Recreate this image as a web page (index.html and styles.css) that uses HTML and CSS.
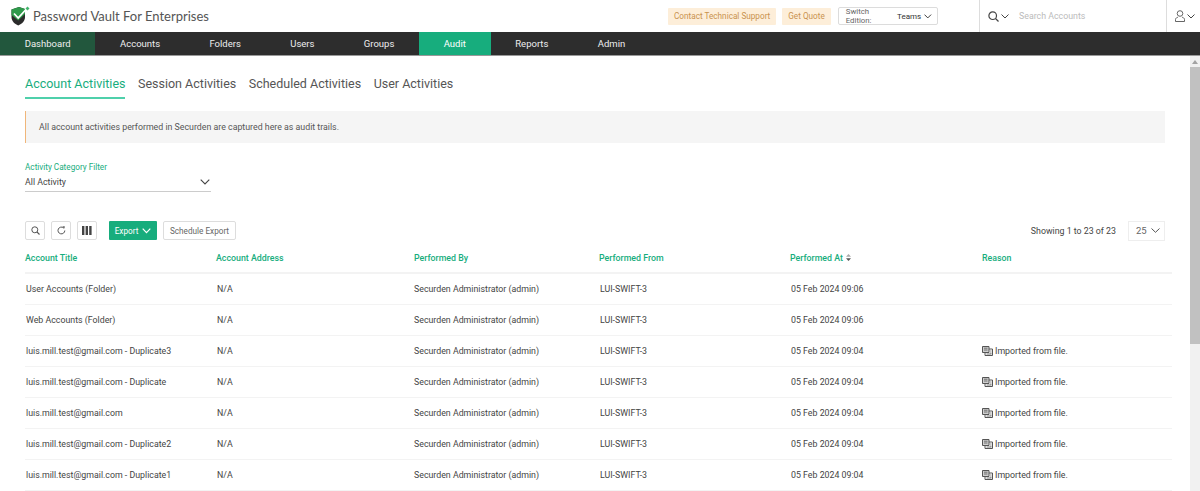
FILE: index.html
```html
<!DOCTYPE html>
<html lang="en">
<head>
    <meta charset="UTF-8">
    <title>Password Vault For Enterprises - Audit</title>
    <link rel="stylesheet" href="styles.css">
</head>
<body>
    <header class="topbar">
        <div class="brand">
            <svg class="logo" width="19" height="20" viewBox="0 0 19 20">
                <path d="M0.5 3.5 L8 1 L14 3 L14 11 C14 15 11 18 7.2 19.5 C3.5 18 0.5 15 0.5 11 Z" fill="#2b2b2b"/>
                <path d="M0.5 3.5 L8 1 L14 3 L14 8 L7.2 14.5 L0.5 9 Z" fill="#2f9a4b"/>
                <path d="M3 7.5 L7.2 12 L15 3.5" fill="none" stroke="#fff" stroke-width="1.8"/>
                <path d="M14.5 2.5 L16.5 0.5 L18.5 2.5 L16.5 4.5 Z" fill="#43b56d"/>
            </svg>
            <span class="brand-name">Password Vault For Enterprises</span>
        </div>
        <div class="top-actions">
            <a class="promo">Contact Technical Support</a>
            <a class="promo">Get Quote</a>
            <div class="edition">
                <span class="edition-label">Switch Edition:</span>
                <span class="edition-value">Teams</span>
                <svg class="chev" width="8" height="5" viewBox="0 0 8 5"><path d="M0.5 0.5 L4 4 L7.5 0.5" fill="none" stroke="#333" stroke-width="1"/></svg>
            </div>
        </div>
        <div class="search">
            <svg width="11" height="11" viewBox="0 0 11 11"><circle cx="4.7" cy="4.7" r="3.8" fill="none" stroke="#444" stroke-width="1.2"/><path d="M7.5 7.5 L10.5 10.5" stroke="#444" stroke-width="1.3"/></svg>
            <svg class="chev" width="8" height="5" viewBox="0 0 8 5"><path d="M0.5 0.5 L4 4 L7.5 0.5" fill="none" stroke="#444" stroke-width="1"/></svg>
            <span class="search-text">Search Accounts</span>
        </div>
        <div class="user">
            <svg width="10" height="12" viewBox="0 0 10 12"><circle cx="5" cy="3.5" r="2.8" fill="none" stroke="#555" stroke-width="0.9"/><path d="M0.5 11.5 L0.5 9.5 C0.5 8 2 7.5 3 7.2 M9.5 11.5 L9.5 9.5 C9.5 8 8 7.5 7 7.2 M0.5 11.5 L9.5 11.5" fill="none" stroke="#555" stroke-width="0.9"/></svg>
            <svg class="chev" width="8" height="5" viewBox="0 0 8 5"><path d="M0.5 0.5 L4 4 L7.5 0.5" fill="none" stroke="#444" stroke-width="1"/></svg>
        </div>
    </header>

    <nav class="mainnav">
        <a class="nav-dash">Dashboard</a>
        <a>Accounts</a>
        <a>Folders</a>
        <a>Users</a>
        <a>Groups</a>
        <a class="nav-audit">Audit</a>
        <a>Reports</a>
        <a>Admin</a>
    </nav>

    <div class="page">
        <main class="content">
            <div class="tabs">
                <a class="tab active">Account Activities</a>
                <a class="tab">Session Activities</a>
                <a class="tab">Scheduled Activities</a>
                <a class="tab">User Activities</a>
            </div>

            <div class="notice">All account activities performed in Securden are captured here as audit trails.</div>

            <div class="filter">
                <label class="filter-label">Activity Category Filter</label>
                <div class="filter-select">
                    <span>All Activity</span>
                    <svg width="10" height="6" viewBox="0 0 10 6"><path d="M0.7 0.7 L5 5 L9.3 0.7" fill="none" stroke="#444" stroke-width="1.1"/></svg>
                </div>
            </div>

            <div class="toolbar">
                <button class="tool">
                    <svg width="9" height="9" viewBox="0 0 9 9"><circle cx="3.8" cy="3.8" r="3" fill="none" stroke="#555" stroke-width="1"/><path d="M6 6 L8.5 8.5" stroke="#555" stroke-width="1.1"/></svg>
                </button>
                <button class="tool">
                    <svg width="9" height="9" viewBox="0 0 9 9"><path d="M7.8 4.5 A3.4 3.4 0 1 1 6.5 1.8" fill="none" stroke="#555" stroke-width="1"/><path d="M5.6 0.2 L8 0.6 L7 2.9 Z" fill="#555"/></svg>
                </button>
                <button class="tool">
                    <svg width="10" height="9" viewBox="0 0 10 9"><path d="M0 0 H2.4 V9 H0 Z M3.6 0 H6 V9 H3.6 Z M7.2 0 H9.6 V9 H7.2 Z" fill="#444"/></svg>
                </button>
                <button class="export">Export
                    <svg width="9" height="6" viewBox="0 0 9 6"><path d="M0.7 0.7 L4.5 4.6 L8.3 0.7" fill="none" stroke="#fff" stroke-width="1.2"/></svg>
                </button>
                <button class="schedule">Schedule Export</button>
                <div class="pager">
                    <span>Showing 1 to 23 of 23</span>
                    <div class="page-size">
                        <span>25</span>
                        <svg width="9" height="5" viewBox="0 0 9 5"><path d="M0.5 0.5 L4.5 4.3 L8.5 0.5" fill="none" stroke="#555" stroke-width="1"/></svg>
                    </div>
                </div>
            </div>

            <table class="audit">
                <colgroup>
                    <col class="c1"><col class="c2"><col class="c3"><col class="c4"><col class="c5"><col>
                </colgroup>
                <thead>
                    <tr>
                        <th>Account Title</th>
                        <th>Account Address</th>
                        <th>Performed By</th>
                        <th>Performed From</th>
                        <th>Performed At <svg class="sort" width="5" height="7" viewBox="0 0 5 7"><path d="M0 2.7 L2.5 0 L5 2.7 Z" fill="#aaa"/><path d="M0 4.3 L2.5 7 L5 4.3 Z" fill="#555"/></svg></th>
                        <th>Reason</th>
                    </tr>
                </thead>
                <tbody id="rows"></tbody>
            </table>
        </main>
        <aside class="rail">
            <svg class="rail-up" width="6" height="4" viewBox="0 0 6 4"><path d="M0 4 L3 0 L6 4 Z" fill="#a3a3a3"/></svg>
            <div class="rail-thumb"></div>
        </aside>
    </div>

    <script>
        const rows = [
            ["User Accounts (Folder)", "05 Feb 2024 09:06", false],
            ["Web Accounts (Folder)", "05 Feb 2024 09:06", false],
            ["luis.mill.test@gmail.com - Duplicate3", "05 Feb 2024 09:04", true],
            ["luis.mill.test@gmail.com - Duplicate", "05 Feb 2024 09:04", true],
            ["luis.mill.test@gmail.com", "05 Feb 2024 09:04", true],
            ["luis.mill.test@gmail.com - Duplicate2", "05 Feb 2024 09:04", true],
            ["luis.mill.test@gmail.com - Duplicate1", "05 Feb 2024 09:04", true]
        ];
        const reason = `<svg class="reason-icon" width="11" height="10" viewBox="0 0 11 10"><path d="M3 3 H10.5 V9.5 H3 Z" fill="#fff" stroke="#555"/><path d="M0.5 0.5 H7 V6.5 H0.5 Z" fill="#cfcfcf" stroke="#555"/><path d="M2 2.2 H5.5 M2 4 H5.5 M8.2 5 H9.5 M8.2 7 H9.5 M4.5 8 H9.5" stroke="#555" stroke-width="0.8"/></svg>Imported from file.`;
        document.getElementById('rows').innerHTML = rows.map(r => `<tr>
            <td>${r[0]}</td>
            <td>N/A</td>
            <td>Securden Administrator (admin)</td>
            <td>LUI-SWIFT-3</td>
            <td>${r[1]}</td>
            <td>${r[2] ? reason : ""}</td>
        </tr>`).join("");
    </script>
</body>
</html>
```

FILE: styles.css
```css
* {
    margin: 0;
    padding: 0;
    box-sizing: border-box;
}
html, body {
    width: 100%;
    height: 100%;
    overflow: hidden;
}
body {
    font-family: Roboto, sans-serif;
    font-size: 8.8px;
    color: #444;
    background: white;
    display: flex;
    flex-direction: column;
}
.topbar {
    height: 32px;
    display: flex;
    align-items: stretch;
    flex-shrink: 0;
}
.brand {
    display: flex;
    align-items: center;
    width: 668px;
    padding-left: 11px;
}
.logo {
    margin-right: 3px;
}
.brand-name {
    font-family: Lato, sans-serif;
    font-size: 13px;
    color: #555;
}
.top-actions {
    width: 311px;
    display: flex;
    align-items: center;
    gap: 6px;
}
.promo {
    height: 17px;
    line-height: 17px;
    padding: 0 6px;
    font-size: 8.2px;
    background: #fdeed9;
    color: #c9924f;
    border-radius: 1px;
}
.edition {
    width: 100px;
    height: 18px;
    padding: 0 5px 0 7px;
    display: flex;
    align-items: center;
    gap: 3px;
    border: 1px solid #dcdcdc;
    border-radius: 2px;
    margin-left: 1px;
}
.edition-label {
    color: #666;
    font-size: 7.8px;
}
.edition-value {
    color: #333;
    font-size: 8px;
}
.search {
    width: 187px;
    border-left: 1px solid #ddd;
    display: flex;
    align-items: center;
    padding-left: 8px;
    gap: 2px;
}
.search-text {
    color: #bbb;
    margin-left: 8px;
}
.user {
    flex: 1;
    border-left: 1px solid #ddd;
    display: flex;
    align-items: center;
    padding-left: 8px;
    gap: 2px;
}
.mainnav {
    height: 24px;
    background: #2d2d2d;
    border-bottom: 1px solid #999;
    display: flex;
    flex-shrink: 0;
}
.mainnav a {
    color: #eee;
    font-size: 9.5px;
    line-height: 23px;
    padding: 0 24.7px;
}
.nav-dash {
    background: #22573d;
}
.mainnav .nav-audit {
    background: #17ad7d;
    color: white;
}
.page {
    flex: 1;
    display: flex;
    min-height: 0;
}
.content {
    flex: 1;
    padding: 20px 18px 0 25px;
    overflow: hidden;
}
.rail {
    width: 10px;
    background: #f1f1f1;
    display: flex;
    flex-direction: column;
    align-items: center;
    padding-top: 4px;
}
.rail-up {
    display: block;
}
.rail-thumb {
    width: 100%;
    height: 277px;
    margin-top: 3px;
    background: #c1c1c1;
}
.tabs {
    display: flex;
    gap: 12.5px;
    height: 23px;
}
.tab {
    font-size: 12.5px;
    color: #555;
    line-height: 15px;
    height: 23px;
}
.tab.active {
    color: #17ad7d;
    border-bottom: 2px solid #4fd0ab;
    padding-top: 0;
}
.notice {
    margin-top: 12px;
    width: 1140px;
    height: 32px;
    line-height: 32px;
    padding-left: 13px;
    background: #f5f5f5;
    border-left: 1px solid #f0b67a;
    color: #555;
}
.filter {
    margin-top: 19px;
    width: 186px;
}
.filter-label {
    display: block;
    font-size: 8.2px;
    color: #17ad7d;
    line-height: 10px;
}
.filter-select {
    display: flex;
    justify-content: space-between;
    align-items: center;
    height: 20px;
    padding-right: 1px;
    border-bottom: 1px solid #ccc;
}
.toolbar {
    margin-top: 29px;
    width: 1140px;
    display: flex;
    align-items: center;
    height: 19px;
}
button {
    font-family: inherit;
    background: white;
    cursor: pointer;
}
.tool {
    width: 20px;
    height: 19px;
    border: 1px solid #ddd;
    border-radius: 2px;
    margin-right: 6px;
    display: flex;
    align-items: center;
    justify-content: center;
}
.export {
    margin-left: 6px;
    width: 48px;
    height: 19px;
    border: none;
    border-radius: 1px;
    background: #17ad7d;
    color: white;
    font-size: 8.2px;
    display: flex;
    align-items: center;
    justify-content: center;
    gap: 4px;
}
.schedule {
    margin-left: 6px;
    width: 73px;
    height: 19px;
    border: 1px solid #ddd;
    border-radius: 2px;
    color: #666;
    font-size: 8.2px;
}
.pager {
    margin-left: auto;
    display: flex;
    align-items: center;
    gap: 12px;
}
.page-size {
    width: 37px;
    height: 20px;
    border: 1px solid #eee;
    display: flex;
    align-items: center;
    justify-content: space-between;
    padding: 0 4px 0 7px;
    color: #666;
    font-size: 9.5px;
}
.audit {
    margin-top: 10px;
    width: 1147px;
    border-collapse: collapse;
    table-layout: fixed;
}
.c1 { width: 191px; }
.c2 { width: 198px; }
.c3 { width: 185px; }
.c4 { width: 191px; }
.c5 { width: 192px; }
.audit th {
    height: 23px;
    padding-bottom: 6px;
    text-align: left;
    font-weight: 500;
    color: #17ad7d;
    border-bottom: 2px solid #f3f3f3;
}
.audit td {
    height: 31px;
    padding: 1px 0 0 1px;
    border-bottom: 1px solid #f3f3f3;
    color: #444;
}
.audit td:nth-child(3),
.audit td:nth-child(6) {
    padding-left: 0;
}
.sort {
    margin-left: 1px;
}
.reason-icon {
    vertical-align: -2px;
    margin-right: 2px;
}
```
